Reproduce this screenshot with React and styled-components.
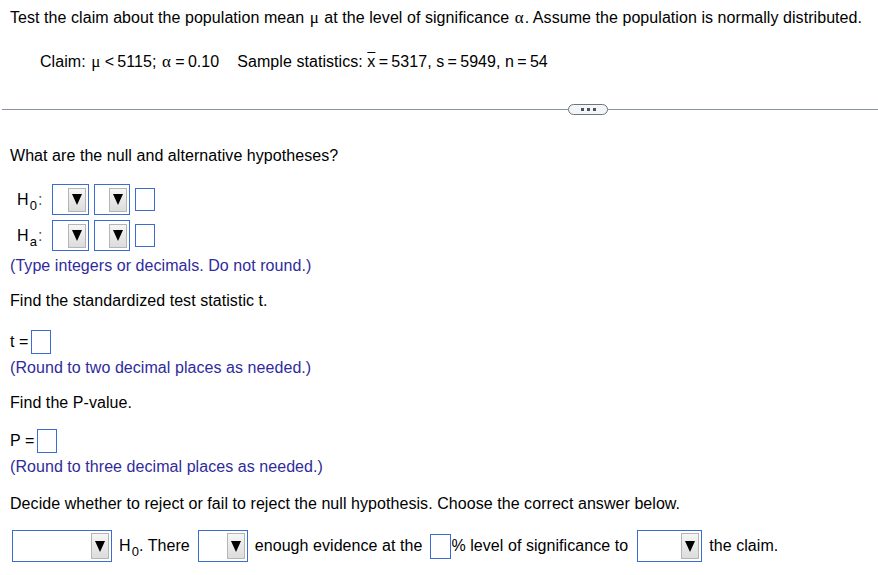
import React from "react";
import styled, { createGlobalStyle } from "styled-components";

const GlobalStyle = createGlobalStyle`
  html, body {
    margin: 0;
    padding: 0;
    background: #fff;
  }
  body {
    font-family: "Liberation Sans", Arial, sans-serif;
    font-size: 16px;
    letter-spacing: 0.06px;
    color: #000;
  }
`;

const Page = styled.div`
  width: 878px;
  height: 575px;
  padding: 8px 0 0 10px;
  box-sizing: border-box;
  overflow: hidden;
`;

const Line = styled.div`
  display: flex;
  align-items: center;
  height: ${(p) => p.h || 20}px;
  margin-top: ${(p) => p.mt || 0}px;
  padding-left: ${(p) => p.indent || 0}px;
  color: ${(p) => (p.hint ? "#2f2b9c" : "#000")};
  white-space: pre;
`;

const Greek = styled.span`
  font-family: "Liberation Serif", "Times New Roman", serif;
  font-size: 17px;
  margin: 0 1px;
`;

const Bar = styled.span`
  text-decoration: overline;
`;

const Gap = styled.span`
  display: inline-block;
  width: ${(p) => p.w}px;
`;

const Divider = styled.div`
  display: flex;
  align-items: center;
  height: 11px;
  margin: 32px 0 0 -8px;
`;

const Rule = styled.div`
  height: 1px;
  background: #8a92a0;
  flex: ${(p) => (p.w ? `0 0 ${p.w}px` : "1")};
`;

const Pill = styled.div`
  width: 38px;
  height: 9px;
  border: 1px solid #6a7584;
  border-radius: 6px;
  background: #f3f5f7;
  display: flex;
  align-items: center;
  justify-content: center;
  gap: 3px;
`;

const Dot = styled.span`
  width: 3px;
  height: 3px;
  background: #4a5460;
`;

const HRows = styled.div`
  display: flex;
  flex-direction: column;
  gap: 5px;
  margin-top: 18px;
  padding-left: 7px;
`;

const HRow = styled.div`
  display: flex;
  align-items: center;
  height: 31px;
`;

const HLabel = styled.span`
  width: 35px;
`;

const Sub = styled.span`
  font-size: 13px;
  position: relative;
  top: 5px;
  margin-left: 1px;
`;

const Colon = styled.span`
  color: #555;
  margin-left: 1px;
`;

const Select = styled.div`
  box-sizing: border-box;
  width: ${(p) => p.w}px;
  height: ${(p) => p.h || 31}px;
  border: 1px solid #3b6cd3;
  display: flex;
  justify-content: flex-end;
  align-items: center;
  padding-right: 2px;
  margin-right: ${(p) => p.mr || 0}px;
  background: #fff;
`;

const ArrowBtn = styled.div`
  box-sizing: border-box;
  width: 18px;
  height: ${(p) => p.h || 24}px;
  border: 1px solid #b5b5b5;
  background: linear-gradient(#f6f6f6, #dcdcdc);
  display: flex;
  align-items: center;
  justify-content: center;
`;

const Input = styled.div`
  box-sizing: border-box;
  width: ${(p) => p.w || 20}px;
  height: ${(p) => p.h || 24}px;
  border: 1px solid #3b6cd3;
  margin: 0 ${(p) => p.mr || 0}px 0 ${(p) => p.ml || 0}px;
  background: #fff;
`;

const Answer = styled.div`
  display: flex;
  align-items: center;
  height: 32px;
  margin-top: 16px;
  padding-left: 2px;
  white-space: pre;
`;

const Text = styled.span`
  margin: 0 ${(p) => p.mr || 0}px 0 ${(p) => p.ml || 0}px;
`;

const Tri = () => (
  <svg width="10" height="11" viewBox="0 0 10 11">
    <path d="M0 0 H10 L5 11 Z" fill="#000" />
  </svg>
);

const Dropdown = ({ w, h, mr, btnH }) => (
  <Select w={w} h={h} mr={mr}>
    <ArrowBtn h={btnH}>
      <Tri />
    </ArrowBtn>
  </Select>
);

const HypRow = ({ sub }) => (
  <HRow>
    <HLabel>
      H<Sub>{sub}</Sub>
      <Colon>:</Colon>
    </HLabel>
    <Dropdown w={37} mr={5} />
    <Dropdown w={36} mr={5} />
    <Input w={20} h={23} />
  </HRow>
);

const T = "\u2009";

export default function App() {
  return (
    <>
      <GlobalStyle />
      <Page>
        <Line>
          {"Test the claim about the population mean "}
          <Greek>μ</Greek>
          {" at the level of significance "}
          <Greek>α</Greek>
          {". Assume the population is normally distributed."}
        </Line>
        <Line mt={24} indent={30}>
          {"Claim: "}
          <Greek>μ</Greek>
          {`${T}<${T}5115; `}
          <Greek>α</Greek>
          {`${T}=${T}0.10`}
          <Gap w={18} />
          {"Sample statistics: "}
          <Bar>x</Bar>
          {`${T}=${T}5317, s${T}=${T}5949, n${T}=${T}54`}
        </Line>

        <Divider>
          <Rule w={566} />
          <Pill>
            <Dot />
            <Dot />
            <Dot />
          </Pill>
          <Rule />
        </Divider>

        <Line mt={31}>What are the null and alternative hypotheses?</Line>

        <HRows>
          <HypRow sub="0" />
          <HypRow sub="a" />
        </HRows>

        <Line mt={5} hint>
          (Type integers or decimals. Do not round.)
        </Line>

        <Line mt={15}>Find the standardized test statistic t.</Line>

        <Line mt={19} h={24}>
          {"t ="}
          <Input ml={3} />
        </Line>
        <Line mt={4} hint>
          (Round to two decimal places as needed.)
        </Line>

        <Line mt={15}>Find the P-value.</Line>

        <Line mt={16} h={24}>
          {"P ="}
          <Input ml={3} />
        </Line>
        <Line mt={4} hint>
          (Round to three decimal places as needed.)
        </Line>

        <Line mt={17}>
          Decide whether to reject or fail to reject the null hypothesis. Choose the correct answer
          below.
        </Line>

        <Answer>
          <Dropdown w={100} h={32} mr={7} btnH={26} />
          <Text mr={8}>
            H<Sub>0</Sub>. There
          </Text>
          <Dropdown w={50} h={32} mr={7} btnH={26} />
          <Text mr={8}>enough evidence at the</Text>
          <Input w={21} h={25} />
          <Text mr={9}>% level of significance to</Text>
          <Dropdown w={65} h={32} mr={7} btnH={26} />
          <Text>the claim.</Text>
        </Answer>
      </Page>
    </>
  );
}
